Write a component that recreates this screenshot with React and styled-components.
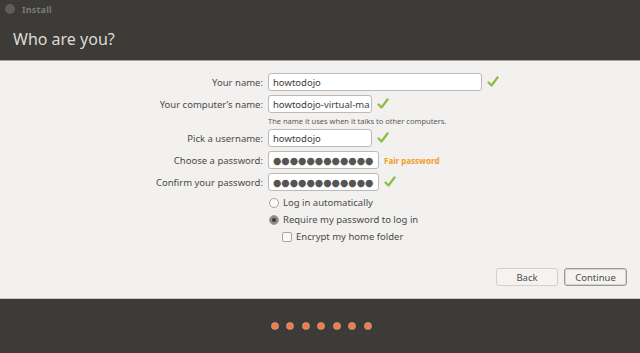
import styled, { createGlobalStyle } from 'styled-components';

const GlobalStyle = createGlobalStyle`
  html, body { margin: 0; padding: 0; }
  body {
    width: 640px;
    height: 353px;
    overflow: hidden;
    background: #3c3b37;
    font-family: "Noto Sans", "DejaVu Sans", sans-serif;
  }
`;

const Window = styled.div`
  width: 640px;
  height: 353px;
  display: flex;
  flex-direction: column;
  background: #3c3b37;
`;

const Header = styled.div`
  height: 60px;
  box-sizing: border-box;
  padding: 3px 0 0 5px;
  display: flex;
  flex-direction: column;
`;

const TitleBar = styled.div`
  display: flex;
  align-items: center;
  gap: 7px;
  height: 12px;
  .close {
    width: 10px;
    height: 10px;
    border-radius: 50%;
    background: #5e5d59;
  }
  span {
    font-size: 9px;
    font-weight: 700;
    color: #7b7a76;
    letter-spacing: 0.2px;
  }
`;

const Heading = styled.h1`
  margin: 14px 0 0 8px;
  font-size: 16px;
  font-weight: 400;
  color: #dcdad5;
  line-height: 20px;
`;

const Content = styled.div`
  height: 239px;
  box-sizing: border-box;
  background: #f2f1ef;
  border-top: 1px solid #a6a49f;
  border-bottom: 1px solid #c9c7c2;
  padding-top: 12px;
  display: flex;
  flex-direction: column;
`;

const Row = styled.div`
  display: flex;
  align-items: center;
  height: 18px;
  margin-bottom: ${p => p.$mb ?? 4}px;
`;

const Label = styled.label`
  width: 268px;
  text-align: right;
  font-size: 9.5px;
  color: #4a4a48;
  padding-right: 5px;
  box-sizing: border-box;
  flex: none;
`;

const Field = styled.div`
  width: ${p => p.$w}px;
  height: 18px;
  box-sizing: border-box;
  border: 1px solid #bdbab5;
  border-radius: 3px;
  background: #fff;
  display: flex;
  align-items: center;
  padding-left: 4px;
  font-size: 9.5px;
  color: #3c3c3c;
  overflow: hidden;
  white-space: nowrap;
  flex: none;
`;

const Dots = styled.span`
  font-size: 9.6px;
  letter-spacing: 0px;
  color: #555553;
`;

const Hint = styled.div`
  margin: -1px 0 3px 268px;
  font-size: 7.5px;
  color: #5a5a58;
  height: 10px;
  line-height: 10px;
`;

const Fair = styled.span`
  margin-left: 5px;
  font-size: 8px;
  font-weight: 700;
  color: #f39c1f;
`;

const CheckIcon = styled.svg`
  margin-left: 5px;
  flex: none;
`;

const Check = () => (
  <CheckIcon width="12" height="12" viewBox="0 0 12 12">
    <path d="M1.5 6.5 L4.5 9.5 L10.5 1.5" fill="none" stroke="#8cbd3e" strokeWidth="2.2" strokeLinecap="round" strokeLinejoin="round" />
  </CheckIcon>
);

const Options = styled.div`
  margin-left: 269px;
  display: flex;
  flex-direction: column;
`;

const Option = styled.div`
  display: flex;
  align-items: center;
  height: 17px;
  margin-left: ${p => (p.$indent ? 13 : 0)}px;
  font-size: 9.5px;
  color: #4a4a48;
  gap: 4px;
`;

const Radio = styled.span`
  width: 10px;
  height: 10px;
  box-sizing: border-box;
  border-radius: 50%;
  border: 1px solid #a9a6a1;
  background: ${p => (p.$on ? '#6b6a66' : '#fafafa')};
  box-shadow: ${p => (p.$on ? 'inset 0 0 0 2.5px #8e8d89' : 'none')};
  position: relative;
  flex: none;
  &::after {
    content: '';
    display: ${p => (p.$on ? 'block' : 'none')};
    position: absolute;
    left: 2px;
    top: 2px;
    width: 4px;
    height: 4px;
    border-radius: 50%;
    background: #3c3b39;
  }
`;

const Box = styled.span`
  width: 10px;
  height: 10px;
  box-sizing: border-box;
  border-radius: 2px;
  border: 1px solid #a9a6a1;
  background: #fafafa;
  flex: none;
`;

const Buttons = styled.div`
  margin-top: auto;
  margin-bottom: 12px;
  display: flex;
  justify-content: flex-end;
  gap: 6px;
  padding-right: 13px;
`;

const Button = styled.button`
  width: ${p => p.$w}px;
  height: 18px;
  box-sizing: border-box;
  border: 1px solid ${p => (p.$focus ? '#9c9994' : '#d3d0cb')};
  box-shadow: ${p => (p.$focus ? 'inset 0 0 0 1px #d6d3ce' : 'none')};
  border-radius: 3px;
  background: #f4f3f1;
  font-family: inherit;
  font-size: 9.5px;
  color: #4c4c4a;
  padding: 0;
`;

const Footer = styled.div`
  flex: 1;
  display: flex;
  justify-content: center;
  align-items: center;
  gap: 9.5px;
  padding-left: 2px;
`;

const Dot = styled.span`
  width: 6px;
  height: 6px;
  border-radius: 50%;
  background: #f37a45;
  box-shadow: 0 0 0 0.8px #c9a28e;
`;

export default function App() {
  return (
    <Window>
      <GlobalStyle />
      <Header>
        <TitleBar>
          <div className="close" />
          <span>Install</span>
        </TitleBar>
        <Heading>Who are you?</Heading>
      </Header>
      <Content>
        <Row>
          <Label>Your name:</Label>
          <Field $w={214}>howtodojo</Field>
          <Check />
        </Row>
        <Row>
          <Label>Your computer’s name:</Label>
          <Field $w={104}>howtodojo-virtual-ma</Field>
          <Check />
        </Row>
        <Hint>The name it uses when it talks to other computers.</Hint>
        <Row>
          <Label>Pick a username:</Label>
          <Field $w={104}>howtodojo</Field>
          <Check />
        </Row>
        <Row>
          <Label>Choose a password:</Label>
          <Field $w={111}><Dots>{'●'.repeat(12)}</Dots></Field>
          <Fair>Fair password</Fair>
        </Row>
        <Row $mb={3}>
          <Label>Confirm your password:</Label>
          <Field $w={111}><Dots>{'●'.repeat(12)}</Dots></Field>
          <Check />
        </Row>
        <Options>
          <Option><Radio />Log in automatically</Option>
          <Option><Radio $on />Require my password to log in</Option>
          <Option $indent><Box />Encrypt my home folder</Option>
        </Options>
        <Buttons>
          <Button $w={62}>Back</Button>
          <Button $w={63} $focus>Continue</Button>
        </Buttons>
      </Content>
      <Footer>
        {Array.from({ length: 7 }).map((_, i) => <Dot key={i} />)}
      </Footer>
    </Window>
  );
}
